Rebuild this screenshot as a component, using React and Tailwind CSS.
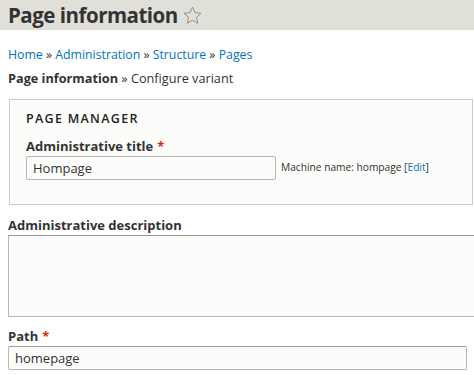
import React from 'react';

const font = { fontFamily: '"Open Sans", "DejaVu Sans", sans-serif' };

const Star = () => (
  <svg width="21" height="21" viewBox="0 0 24 24" fill="none" stroke="#8c8c8c" strokeWidth="1.1" strokeLinejoin="round">
    <path d="M12 2.5l2.9 6.2 6.7.8-5 4.6 1.4 6.7L12 17.4l-6 3.4 1.4-6.7-5-4.6 6.7-.8z" />
  </svg>
);

const Required = () => <span className="text-[#e32700] ml-1">*</span>;

export default function App() {
  return (
    <div className="min-h-screen bg-white text-[#333]" style={font}>
      {/* Title bar */}
      <div className="bg-[#e0dfd8] h-[30px] px-2 flex items-center gap-1">
        <h1 className="text-[20.5px] font-bold leading-none tracking-[-0.5px]">Page information</h1>
        <Star />
      </div>

      <div className="px-2">
        {/* Breadcrumb */}
        <nav className="mt-[17px] text-[12.3px] leading-[16px]">
          <a className="text-[#0074bd]">Home</a> » <a className="text-[#0074bd]">Administration</a> »{' '}
          <a className="text-[#0074bd]">Structure</a> » <a className="text-[#0074bd]">Pages</a>
        </nav>
        <div className="mt-[7px] text-[12.7px] leading-[16px]">
          <span className="font-bold">Page information</span> » Configure variant
        </div>

        {/* Fieldset */}
        <fieldset className="mt-[13px] ml-px -mr-[7px] border border-[#ccc] bg-[#fcfcfa] px-4 pt-[11px] pb-6">
          <div className="text-[12.5px] font-semibold uppercase tracking-[1.3px] leading-4 text-[#222]">Page manager</div>
          <label className="block mt-[11px] text-[13px] font-bold leading-4">
            Administrative title<Required />
          </label>
          <div className="mt-[2px] flex items-center gap-[5px]">
            <input
              readOnly
              value="Hompage"
              className="w-[250px] h-[24px] px-[6px] border border-[#b8b8b8] rounded-[2px] bg-[#fcfcfa] text-[13px] text-[#333] outline-none"
              style={font}
            />
            <span className="text-[10.2px] text-[#333]">
              Machine name: hompage [<a className="text-[#0074bd]">Edit</a>]
            </span>
          </div>
        </fieldset>

        {/* Description */}
        <label className="block mt-[12px] text-[13px] font-bold leading-4">Administrative description</label>
        <textarea
          readOnly
          className="block mt-[2px] w-[calc(100%+12px)] h-[82px] border border-[#b8b8b8] border-t-[#999] bg-[#fcfcfa] resize-none outline-none"
        />

        {/* Path */}
        <label className="block mt-[11px] text-[13px] font-bold leading-4">
          Path<Required />
        </label>
        <input
          readOnly
          value="homepage"
          className="block mt-[2px] w-[459px] h-[24px] px-[6px] border border-[#b8b8b8] border-t-[#999] rounded-[2px] bg-[#fcfcfa] text-[13px] text-[#333] outline-none"
          style={font}
        />
      </div>
    </div>
  );
}
